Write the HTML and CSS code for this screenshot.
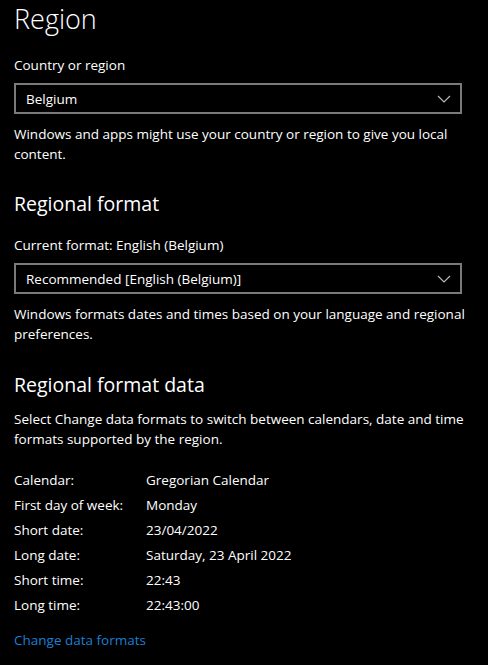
FILE: index.html
```html
<!DOCTYPE html>
<html lang="en">
<head>
<meta charset="utf-8">
<title>Region</title>
<link rel="stylesheet" href="styles.css">
</head>
<body>
<main class="page">
  <h1 class="title">Region</h1>

  <div class="label">Country or region</div>
  <div class="select">
    <span class="select-text">Belgium</span>
    <svg class="chev" width="14" height="8" viewBox="0 0 14 8"><path d="M1 1 L7 7 L13 1" fill="none" stroke="#b8b8b8" stroke-width="1.2"/></svg>
  </div>
  <p class="desc">Windows and apps might use your country or region to give you local content.</p>

  <h2 class="heading">Regional format</h2>
  <div class="label">Current format: English (Belgium)</div>
  <div class="select">
    <span class="select-text">Recommended [English (Belgium)]</span>
    <svg class="chev" width="14" height="8" viewBox="0 0 14 8"><path d="M1 1 L7 7 L13 1" fill="none" stroke="#b8b8b8" stroke-width="1.2"/></svg>
  </div>
  <p class="desc">Windows formats dates and times based on your language and regional preferences.</p>

  <h2 class="heading heading-data">Regional format data</h2>
  <p class="desc desc-data">Select Change data formats to switch between calendars, date and time formats supported by the region.</p>

  <div class="data">
    <span class="key">Calendar:</span><span class="val">Gregorian Calendar</span>
    <span class="key">First day of week:</span><span class="val">Monday</span>
    <span class="key">Short date:</span><span class="val">23/04/2022</span>
    <span class="key">Long date:</span><span class="val">Saturday, 23 April 2022</span>
    <span class="key">Short time:</span><span class="val">22:43</span>
    <span class="key">Long time:</span><span class="val">22:43:00</span>
  </div>

  <a class="link" href="#">Change data formats</a>
</main>
</body>
</html>
```

FILE: styles.css
```css
html, body {
  margin: 0;
  padding: 0;
  background: #000;
}
body {
  font-family: "Open Sans", "Noto Sans", "Liberation Sans", sans-serif;
  color: #fff;
  font-size: 13.5px;
}
.page {
  padding: 0 14px;
  width: 460px;
  display: flex;
  flex-direction: column;
  align-items: flex-start;
}
.title {
  margin: 0;
  font-size: 27px;
  font-weight: 300;
  line-height: 38px;
}
.label {
  margin-top: 17px;
  line-height: 20px;
}
.select {
  box-sizing: border-box;
  margin-top: 8px;
  width: 448px;
  height: 31px;
  border: 2px solid #7a7a7a;
  display: flex;
  align-items: center;
  justify-content: space-between;
  padding: 0 9px 0 10px;
}
.select-text {
  line-height: 20px;
}
.chev {
  display: block;
}
.desc {
  margin: 11px 0 0;
  line-height: 19.5px;
  width: 460px;
}
.heading {
  margin: 26px 0 0;
  font-size: 19.5px;
  font-weight: 400;
  line-height: 28px;
}
.heading-data {
  margin-top: 27px;
}
.desc-data {
  margin-top: 11px;
}
.data {
  margin-top: 18px;
  display: grid;
  grid-template-columns: 132px auto;
  grid-auto-rows: 25px;
  align-items: center;
}
.link {
  margin-top: 13px;
  line-height: 20px;
  color: #1a7fd4;
  text-decoration: none;
}
```
